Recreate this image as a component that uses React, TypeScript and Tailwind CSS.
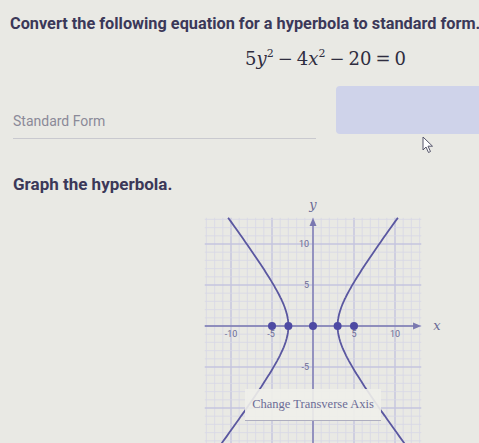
import React from "react";

const UNIT = 8.2;
const CX = 123;
const CY = 131;

function px(x: number) {
  return CX + x * UNIT;
}
function py(y: number) {
  return CY - y * UNIT;
}

function branch(sign: number) {
  const pts: string[] = [];
  for (let t = -2.05; t <= 1.921; t += 0.04) {
    const x = sign * 3 * Math.cosh(t);
    const y = 4 * Math.sinh(t);
    pts.push(`${px(x).toFixed(1)},${py(y).toFixed(1)}`);
  }
  return pts.join(" ");
}

function Graph() {
  const lines = [];
  for (let i = -13; i <= 13; i++) {
    const major = i % 5 === 0;
    lines.push(
      <line
        key={`v${i}`}
        x1={px(i)}
        x2={px(i)}
        y1={py(13.2)}
        y2={252}
        stroke={major ? "#c4c4df" : "#d8d8e6"}
        strokeWidth={major ? 1.4 : 0.8}
      />
    );
  }
  for (let j = -14; j <= 13; j++) {
    const major = j % 5 === 0;
    lines.push(
      <line
        key={`h${j}`}
        x1={px(-13.2)}
        x2={px(13.2)}
        y1={py(j)}
        y2={py(j)}
        stroke={major ? "#c4c4df" : "#d8d8e6"}
        strokeWidth={major ? 1.4 : 0.8}
      />
    );
  }

  const labelCls = { fontFamily: "Roboto, sans-serif", fontSize: 9, fill: "#6b6b96" };

  return (
    <svg width="270" height="252" viewBox="0 0 270 252">
      <text x={px(0)} y={14} textAnchor="middle" fontFamily="'DejaVu Serif', serif" fontStyle="italic" fontSize="13" fill="#6b6b96">
        y
      </text>
      <text x={247} y={135} textAnchor="middle" fontFamily="'DejaVu Serif', serif" fontStyle="italic" fontSize="13" fill="#6b6b96">
        x
      </text>
      {lines}
      {/* axes */}
      <line x1={px(-13.2)} x2={px(12.6)} y1={CY} y2={CY} stroke="#7a78b0" strokeWidth="1.4" />
      <polygon points={`${px(13.2)},${CY} ${px(12.2)},${CY - 3.5} ${px(12.2)},${CY + 3.5}`} fill="#7a78b0" />
      <line x1={CX} x2={CX} y1={py(12.6)} y2={252} stroke="#7a78b0" strokeWidth="1.4" />
      <polygon points={`${CX},${py(13.2)} ${CX - 3.5},${py(12.2)} ${CX + 3.5},${py(12.2)}`} fill="#7a78b0" />

      {/* tick labels */}
      <g style={labelCls as React.CSSProperties}>
        <text x={px(-10)} y={CY + 11} textAnchor="middle">-10</text>
        <text x={px(-5) - 1} y={CY + 11} textAnchor="middle">-5</text>
        <text x={px(5)} y={CY + 11} textAnchor="middle">5</text>
        <text x={px(10)} y={CY + 11} textAnchor="middle">10</text>
        <text x={CX - 4} y={py(10) + 3} textAnchor="end">10</text>
        <text x={CX - 4} y={py(5) + 3} textAnchor="end">5</text>
        <text x={CX - 4} y={py(-5) + 3} textAnchor="end">-5</text>
      </g>

      <polyline points={branch(-1)} fill="none" stroke="#5a57a0" strokeWidth="1.8" />
      <polyline points={branch(1)} fill="none" stroke="#5a57a0" strokeWidth="1.8" />

      {[-5, -3, 0, 3, 5].map((x) => (
        <circle key={x} cx={px(x)} cy={CY} r="4" fill="#4e4aa3" />
      ))}
    </svg>
  );
}

function Cursor() {
  return (
    <svg width="12" height="18" viewBox="0 0 12 18">
      <path d="M1 1 L1 14 L4 11 L6.5 16.5 L8.5 15.5 L6 10.2 L10.5 10.2 Z" fill="#ffffff" stroke="#55556a" strokeWidth="1" strokeLinejoin="round" />
    </svg>
  );
}

export default function App() {
  return (
    <div
      className="relative h-[443px] w-[479px] overflow-hidden bg-[#e9e9e4] text-[#3b3858]"
      style={{ fontFamily: "Roboto, 'Noto Sans', sans-serif" }}
    >
      <div className="pl-[10px] pt-[12px] whitespace-nowrap text-[16.3px] font-bold leading-[24px]">
        Convert the following equation for a hyperbola to standard form.
      </div>

      <div
        className="mt-[10px] flex justify-center pl-[172px] text-[18px] leading-[26px] text-[#2f2d3f]"
        style={{ fontFamily: "'DejaVu Serif', 'Liberation Serif', serif" }}
      >
        <span>
          5<i>y</i>
          <sup className="relative -top-[8px] text-[11px]">2</sup>
          <span className="px-[4px]">−</span>4<i>x</i>
          <sup className="relative -top-[8px] text-[11px]">2</sup>
          <span className="px-[4px]">−</span>20<span className="px-[4px]">=</span>0
        </span>
      </div>

      <div className="mt-[14px] flex items-start">
        <div className="ml-[13px] mt-[25px] w-[303px] border-b border-[#c9c9cf] pb-[6px] text-[14px] text-[#8b8a98]">
          Standard Form
        </div>
        <div className="relative ml-[20px] h-[48px] flex-1 rounded-l-[4px] bg-[#cfd3ea]">
          <div className="absolute left-[86px] top-[50px]">
            <Cursor />
          </div>
        </div>
      </div>

      <div className="ml-[13px] mt-[34px] text-[17px] font-bold leading-[22px]">Graph the hyperbola.</div>

      <div className="relative ml-[190px]">
        <Graph />
        <div className="absolute left-[55px] top-[194px] flex h-[32px] w-[136px] items-center justify-center border-b border-[#aeaec0] bg-[#efefea]/90">
          <span
            className="text-[12.5px] text-[#6b6b96]"
            style={{ fontFamily: "'Liberation Serif', serif" }}
          >
            Change Transverse Axis
          </span>
        </div>
      </div>
    </div>
  );
}
